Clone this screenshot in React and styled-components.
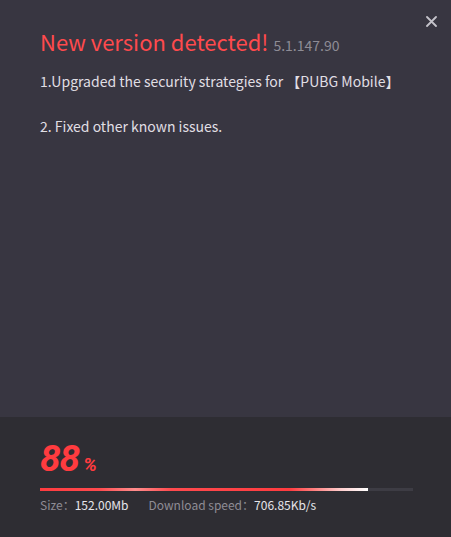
import React from 'react';
import styled, { createGlobalStyle } from 'styled-components';

const GlobalStyle = createGlobalStyle`
  html, body {
    margin: 0;
    padding: 0;
    background: #2e2d33;
  }
  * { box-sizing: border-box; }
`;

const Dialog = styled.div`
  position: relative;
  width: 451px;
  height: 537px;
  display: flex;
  flex-direction: column;
  font-family: "Noto Sans CJK SC", "Noto Sans", sans-serif;
  background: #383641;
`;

const CloseButton = styled.button`
  position: absolute;
  top: 13px;
  right: 12px;
  width: 16px;
  height: 16px;
  padding: 0;
  border: none;
  background: transparent;
  cursor: pointer;
  display: flex;
  align-items: center;
  justify-content: center;
`;

const Body = styled.div`
  flex: 1;
  padding: 25px 40px 0 40px;
`;

const TitleRow = styled.div`
  display: flex;
  align-items: baseline;
  gap: 5px;
`;

const Title = styled.h1`
  margin: 0;
  font-size: 22px;
  font-weight: 400;
  color: #ff4a4d;
  line-height: 32px;
`;

const Version = styled.span`
  font-size: 14px;
  color: #8e8c95;
`;

const Note = styled.p`
  margin: ${p => p.$first ? '12px' : '21px'} 0 0 0;
  font-size: 14px;
  line-height: 24px;
  color: #e0dfe4;
`;

const Footer = styled.div`
  height: 120px;
  background: #2e2d33;
  padding: 24px 38px 0 40px;
`;

const Percent = styled.div`
  font-family: Roboto, "Noto Sans", sans-serif;
  font-style: italic;
  font-weight: 700;
  font-size: 37px;
  line-height: 36px;
  color: #ff3b3f;
  letter-spacing: -1px;
`;

const PercentSign = styled.span`
  font-size: 19px;
  margin-left: 4px;
`;

const Track = styled.div`
  margin-top: 5px;
  height: 3px;
  background: #3d3c44;
`;

const Fill = styled.div`
  height: 100%;
  background: linear-gradient(
    90deg,
    #ff3b3f 0%,
    #ff4a4e 18%,
    #ff8d8d 29%,
    #ff4a4e 40%,
    #ff3b3f 76%,
    #ff7a7a 83%,
    #ffd0d0 92%,
    #ffffff 100%
  );
`;

const Stats = styled.div`
  display: flex;
  gap: 20px;
  margin-top: 5px;
  font-size: 12px;
  line-height: 18px;
`;

const Stat = styled.span`
  color: #8e8c95;
`;

const StatValue = styled.span`
  color: #e6e5ea;
`;

const progress = 88;
const fillRatio = 328 / 373;

export default function App() {
  return (
    <>
      <GlobalStyle />
      <Dialog>
        <CloseButton aria-label="close">
          <svg width="11" height="11" viewBox="0 0 11 11">
            <path d="M1 1L10 10M10 1L1 10" stroke="#c4c3ca" strokeWidth="1.8" strokeLinecap="round" />
          </svg>
        </CloseButton>
        <Body>
          <TitleRow>
            <Title>New version detected!</Title>
            <Version>5.1.147.90</Version>
          </TitleRow>
          <Note $first>1.Upgraded the security strategies for 【PUBG Mobile】</Note>
          <Note>2. Fixed other known issues.</Note>
        </Body>
        <Footer>
          <Percent>
            {progress}<PercentSign>%</PercentSign>
          </Percent>
          <Track>
            <Fill style={{ width: `${fillRatio * 100}%` }} />
          </Track>
          <Stats>
            <Stat>Size：<StatValue>152.00Mb</StatValue></Stat>
            <Stat>Download speed：<StatValue>706.85Kb/s</StatValue></Stat>
          </Stats>
        </Footer>
      </Dialog>
    </>
  );
}
